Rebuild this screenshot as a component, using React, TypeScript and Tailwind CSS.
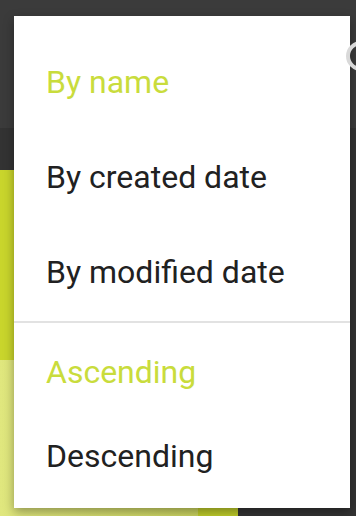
import React from "react";

const sortFields = [
  { label: "By name", active: true },
  { label: "By created date", active: false },
  { label: "By modified date", active: false },
];

const sortOrders = [
  { label: "Ascending", active: true },
  { label: "Descending", active: false },
];

export default function App() {
  return (
    <div
      className="relative h-[516px] w-[356px] overflow-hidden bg-[#333333]"
      style={{ fontFamily: "Roboto, 'Noto Sans', sans-serif" }}
    >
      {/* app behind the menu */}
      <header className="h-[128px] bg-[#3b3b3b]" />
      <div className="h-[42px] bg-[#333333]" />
      <div className="flex w-[238px] flex-col">
        <div className="h-[190px] bg-[#c9d52c]" />
        <div className="flex h-[156px]">
          <div className="w-[198px] bg-gradient-to-r from-[#e0e77e] to-[#cbd460]" />
          <div className="flex-1 bg-[#bfcd2a]" />
        </div>
      </div>

      {/* search icon peeking out at the right edge */}
      <svg
        className="absolute left-[342px] top-[40px] z-20"
        width="30"
        height="34"
        viewBox="0 0 30 34"
      >
        <circle cx="19" cy="16" r="13" fill="none" stroke="#d9d9d9" strokeWidth="4" />
      </svg>

      {/* sort menu */}
      <div className="absolute left-[14px] top-[16px] z-10 w-[336px] bg-white pb-[10px] pt-[19px] shadow-[0_4px_10px_rgba(0,0,0,0.35)]">
        {sortFields.map((item) => (
          <div
            key={item.label}
            className={
              "h-[95px] pl-[32px] text-[32px] leading-[95px] " +
              (item.active ? "text-[#c9dc3c]" : "text-[#212121]")
            }
          >
            {item.label}
          </div>
        ))}
        <div className="mt-[1px] h-[2px] bg-[#e2e2e2]" />
        <div className="pt-[7px]">
          {sortOrders.map((item) => (
            <div
              key={item.label}
              className={
                "h-[84px] pl-[32px] text-[32px] leading-[84px] " +
                (item.active ? "text-[#c9dc3c]" : "text-[#212121]")
              }
            >
              {item.label}
            </div>
          ))}
        </div>
      </div>
    </div>
  );
}
